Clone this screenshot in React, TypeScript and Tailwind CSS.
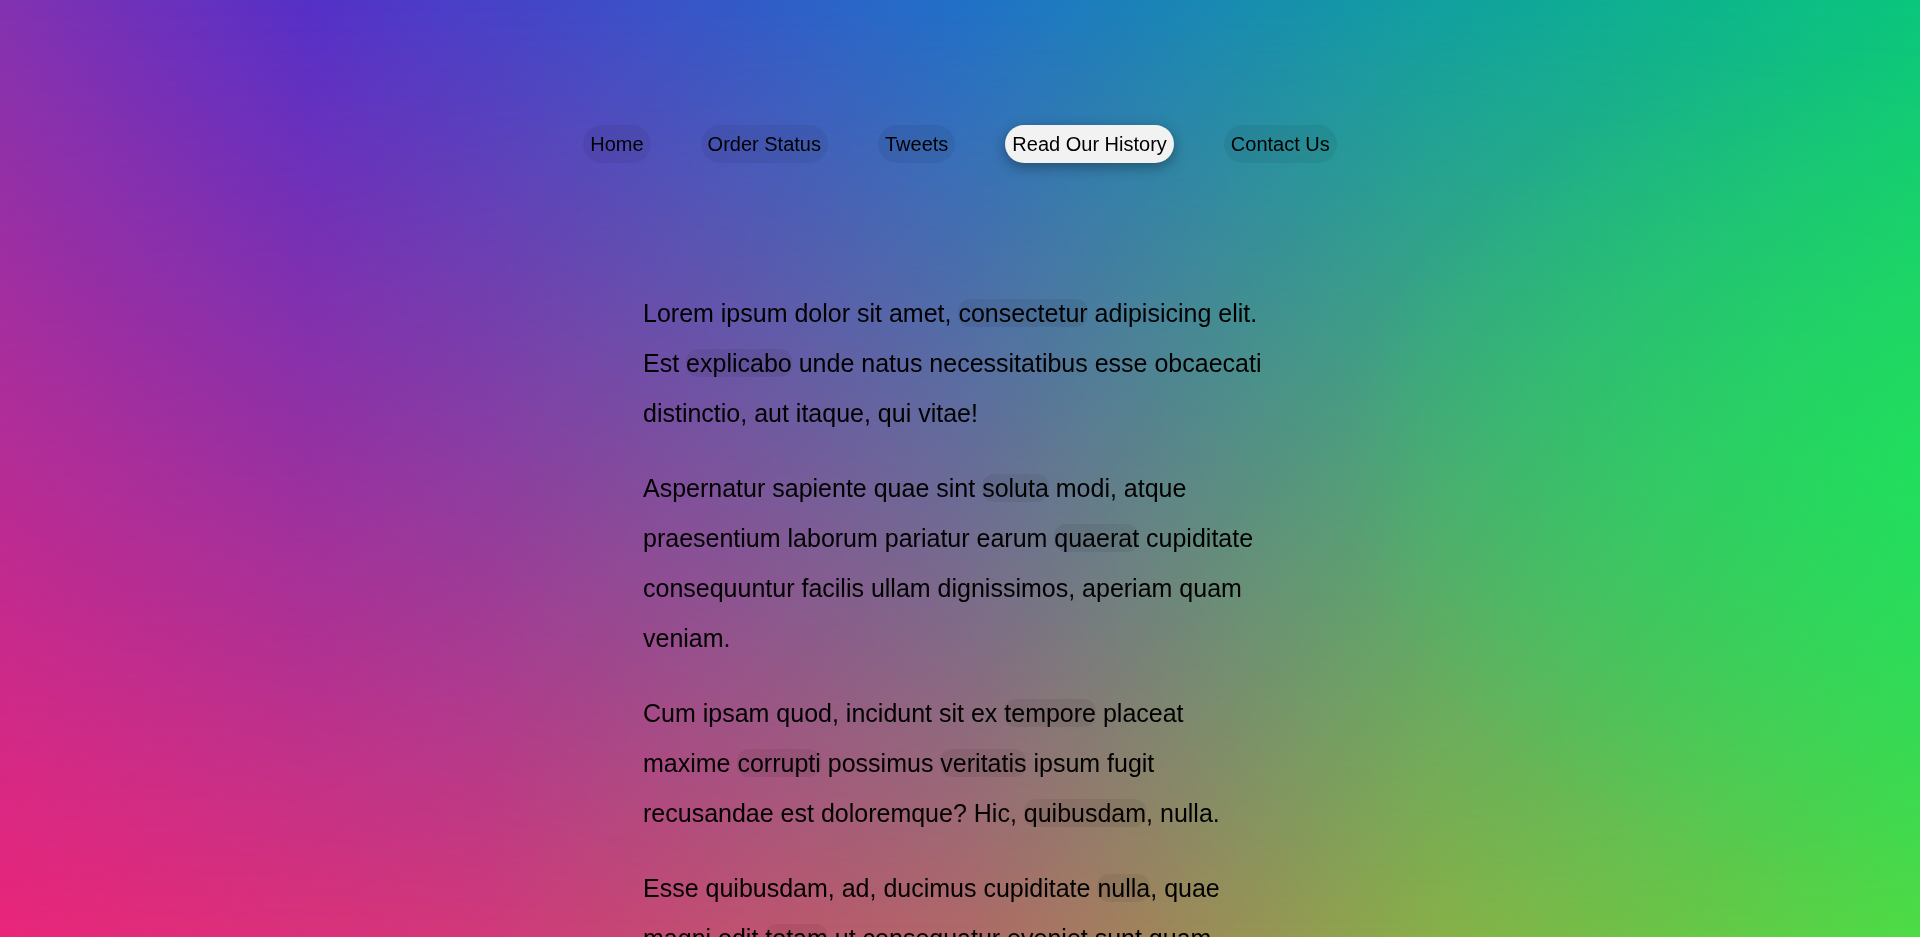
import React from "react";

const Hl = ({ children }: { children: React.ReactNode }) => (
  <span className="rounded-xl bg-black/[0.06]">{children}</span>
);

const navItems = ["Home", "Order Status", "Tweets", "Read Our History", "Contact Us"];

export default function App() {
  return (
    <div className="relative min-h-screen font-['Liberation_Sans',Arial,sans-serif] text-black">
      <div className="fixed inset-0 bg-[linear-gradient(90deg,#ea267a_0%,#d2387a_25%,#b06868_50%,#88b048_75%,#4cdc46_100%)]">
        <div className="absolute inset-0 bg-[linear-gradient(90deg,#8232b0_0%,#5530c8_16%,#2070c8_50%,#10a0a0_75%,#0ac67c_100%)] [mask-image:linear-gradient(to_bottom,#000,transparent)]" />
        <div className="absolute inset-0 bg-[radial-gradient(ellipse_30%_45%_at_100%_50%,rgba(24,232,90,0.55),rgba(24,232,90,0))]" />
      </div>
      <div className="relative">
        <nav className="flex justify-center gap-[50px] pt-[125px]">
          {navItems.map((item) => (
            <a
              key={item}
              href="#"
              className={
                item === "Read Our History"
                  ? "rounded-full bg-[#f2f2f2] px-[7px] py-[7px] text-[20px] leading-[24px] text-black shadow-[0_4px_14px_rgba(0,0,0,0.35)]"
                  : "rounded-full bg-black/[0.06] px-[7px] py-[7px] text-[20px] leading-[24px] text-black"
              }
            >
              {item}
            </a>
          ))}
        </nav>
        <main className="mx-auto mt-[125px] flex w-[634px] flex-col gap-[25px] pb-[25px] text-[25px] leading-[50px]">
          <p>
            Lorem ipsum dolor sit amet, <Hl>consectetur</Hl> adipisicing elit. Est <Hl>explicabo</Hl> unde natus
            necessitatibus esse obcaecati distinctio, aut itaque, qui vitae!
          </p>
          <p>
            Aspernatur sapiente quae sint <Hl>soluta</Hl> modi, atque praesentium laborum pariatur earum{" "}
            <Hl>quaerat</Hl> cupiditate consequuntur facilis ullam dignissimos, aperiam quam veniam.
          </p>
          <p>
            Cum ipsam quod, incidunt sit ex <Hl>tempore</Hl> placeat maxime <Hl>corrupti</Hl> possimus{" "}
            <Hl>veritatis</Hl> ipsum fugit recusandae est doloremque? Hic, <Hl>quibusdam</Hl>, nulla.
          </p>
          <p>
            Esse quibusdam, ad, ducimus cupiditate <Hl>nulla</Hl>, quae magni odit <Hl>totam</Hl> ut consequatur
            eveniet sunt quam provident sapiente dicta neque quod.
          </p>
          <p>
            Dolorum <Hl>voluptatem</Hl> numquam iure, maxime ratione animi tempora officia, <Hl>laudantium</Hl>{" "}
            repellendus quas eaque nemo.
          </p>
        </main>
      </div>
    </div>
  );
}
